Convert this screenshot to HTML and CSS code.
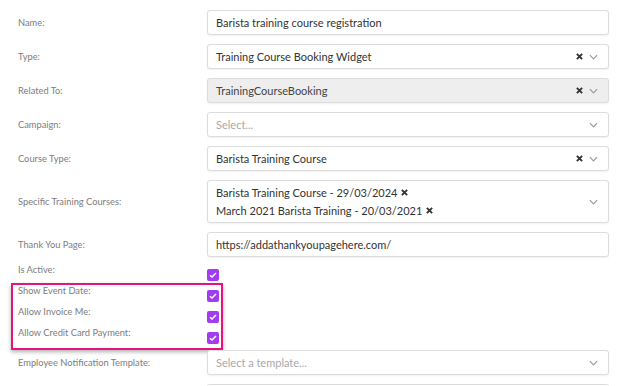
FILE: index.html
```html
<!DOCTYPE html>
<html>
<head>
<meta charset="utf-8">
<link rel="stylesheet" href="styles.css">
</head>
<body>
<div class="form">
  <div class="row"><label class="lbl">Name:</label><div class="field"><span class="val">Barista training course registration</span></div></div>
  <div class="row"><label class="lbl">Type:</label><div class="field"><span class="val">Training Course Booking Widget</span><span class="icons"><svg class="x" viewBox="0 0 8 8"><path d="M1 1L7 7M7 1L1 7"/></svg><svg class="chev" viewBox="0 0 10 6"><path d="M1 1L5 5L9 1"/></svg></span></div></div>
  <div class="row"><label class="lbl">Related To:</label><div class="field disabled"><span class="val">TrainingCourseBooking</span><span class="icons"><svg class="x" viewBox="0 0 8 8"><path d="M1 1L7 7M7 1L1 7"/></svg><svg class="chev" viewBox="0 0 10 6"><path d="M1 1L5 5L9 1"/></svg></span></div></div>
  <div class="row"><label class="lbl">Campaign:</label><div class="field"><span class="val ph">Select...</span><span class="icons"><svg class="chev" viewBox="0 0 10 6"><path d="M1 1L5 5L9 1"/></svg></span></div></div>
  <div class="row"><label class="lbl">Course Type:</label><div class="field"><span class="val">Barista Training Course</span><span class="icons"><svg class="x" viewBox="0 0 8 8"><path d="M1 1L7 7M7 1L1 7"/></svg><svg class="chev" viewBox="0 0 10 6"><path d="M1 1L5 5L9 1"/></svg></span></div></div>
  <div class="row"><label class="lbl">Specific Training Courses:</label><div class="field multi"><div class="tags"><span class="tag">Barista Training Course - 29/03/2024 <svg class="x" viewBox="0 0 8 8"><path d="M1 1L7 7M7 1L1 7"/></svg></span><span class="tag">March 2021 Barista Training - 20/03/2021 <svg class="x" viewBox="0 0 8 8"><path d="M1 1L7 7M7 1L1 7"/></svg></span></div><span class="icons"><svg class="chev" viewBox="0 0 10 6"><path d="M1 1L5 5L9 1"/></svg></span></div></div>
  <div class="row"><label class="lbl">Thank You Page:</label><div class="field"><span class="val">https://addathankyoupagehere.com/</span></div></div>

  <div class="checks">
    <div class="crow first"><label class="lbl">Is Active:</label><span class="cb"><svg viewBox="0 0 12 12"><path d="M3 6.2L5 8L9 4"/></svg></span></div>
    <div class="highlight">
      <div class="crow"><label class="lbl">Show Event Date:</label><span class="cb"><svg viewBox="0 0 12 12"><path d="M3 6.2L5 8L9 4"/></svg></span></div>
      <div class="crow"><label class="lbl">Allow Invoice Me:</label><span class="cb"><svg viewBox="0 0 12 12"><path d="M3 6.2L5 8L9 4"/></svg></span></div>
      <div class="crow"><label class="lbl">Allow Credit Card Payment:</label><span class="cb"><svg viewBox="0 0 12 12"><path d="M3 6.2L5 8L9 4"/></svg></span></div>
    </div>
  </div>

  <div class="row tight"><label class="lbl">Employee Notification Template:</label><div class="field"><span class="val ph">Select a template...</span><span class="icons"><svg class="chev" viewBox="0 0 10 6"><path d="M1 1L5 5L9 1"/></svg></span></div></div>
  <div class="row"><label class="lbl"></label><div class="field"></div></div>
</div>
</body>
</html>
```

FILE: styles.css
```css
html, body {
  margin: 0;
  padding: 0;
  background: #fff;
  overflow: hidden;
}
body {
  font-family: Lato, "Open Sans", sans-serif;
  width: 624px;
  height: 386px;
}
.form {
  padding: 10px 0 0 18px;
  display: flex;
  flex-direction: column;
  gap: 9px;
}
.row {
  display: grid;
  grid-template-columns: 189px 402px;
  align-items: center;
}
.lbl {
  font-size: 9.3px;
  color: #7d7d7d;
  line-height: 12px;
}
.field {
  box-sizing: border-box;
  height: 25px;
  border: 1px solid #dcdcdc;
  border-radius: 3px;
  box-shadow: 0 1px 2px rgba(0,0,0,0.06);
  display: flex;
  align-items: center;
  padding: 0 10px 0 8px;
  background: #fff;
  font-size: 11px;
  color: #333;
}
.field.disabled {
  background: #eeeeee;
  color: #444;
}
.field.multi {
  height: 43px;
}
.val {
  flex: 1;
  white-space: nowrap;
}
.val.ph {
  color: #a8a8a8;
}
.tags {
  flex: 1;
  display: flex;
  flex-direction: column;
  gap: 5px;
}
.tag {
  display: flex;
  align-items: center;
  gap: 4px;
  line-height: 13px;
}
.icons {
  display: flex;
  align-items: center;
  gap: 6px;
}
svg.x {
  width: 7px;
  height: 7px;
  fill: none;
  stroke: #333;
  stroke-width: 2.2;
}
svg.chev {
  width: 9px;
  height: 6px;
  fill: none;
  stroke: #9a9a9a;
  stroke-width: 1.3;
}
.checks {
  display: flex;
  flex-direction: column;
  margin-top: -2px;
}
.crow {
  display: grid;
  grid-template-columns: 189px 12px;
  height: 21px;
  align-items: start;
}
.crow.first {
  height: 19px;
}
.cb {
  width: 12px;
  height: 12px;
  border-radius: 2px;
  background: #a13cf2;
  margin-top: 5px;
  display: block;
}
.cb svg {
  width: 12px;
  height: 12px;
  display: block;
  fill: none;
  stroke: #fff;
  stroke-width: 1.5;
}
.highlight {
  margin-left: -7px;
  width: 202px;
  padding-left: 5px;
  padding-right: 1px;
  border: 2px solid #e8127c;
  box-shadow: 0 2px 4px rgba(0,0,0,0.3);
}
.row.tight {
  margin-top: -9px;
}
```
